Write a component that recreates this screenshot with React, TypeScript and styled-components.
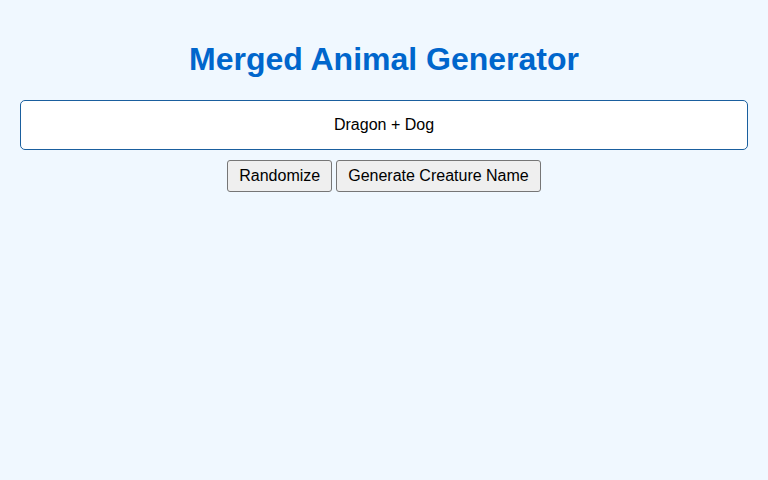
import React, { useState } from "react";
import styled, { createGlobalStyle } from "styled-components";

const GlobalStyle = createGlobalStyle`
  body {
    margin: 0;
    background: #f0f8ff;
    font-family: "Liberation Sans", Arial, sans-serif;
  }
`;

const Page = styled.div`
  padding: 20px;
  text-align: center;
`;

const Title = styled.h1`
  color: #0066cc;
  font-size: 32px;
  margin: 21px 0 22px;
`;

const NameField = styled.input`
  display: block;
  width: 100%;
  box-sizing: border-box;
  padding: 15px;
  font-size: 16px;
  font-family: "Liberation Sans", Arial, sans-serif;
  text-align: center;
  border: 1px solid #1a5f9e;
  border-radius: 5px;
  background: #fff;
  color: #000;
  margin: 0 0 10px;
`;

const BtnRow = styled.div`
  display: flex;
  justify-content: center;
  gap: 4px;
`;

const Button = styled.button`
  font-size: 16px;
  font-family: "Liberation Sans", Arial, sans-serif;
  padding: 6px 11px;
  background: #efefef;
  border: 1px solid #767676;
  border-radius: 3px;
  color: #000;
  line-height: 18px;
`;

const animals = ["Dragon", "Dog", "Cat", "Lion", "Eagle", "Shark", "Wolf", "Bear"];

function App() {
  const [value, setValue] = useState("Dragon + Dog");

  const randomize = () => {
    const a = animals[Math.floor(Math.random() * animals.length)];
    const b = animals[Math.floor(Math.random() * animals.length)];
    setValue(`${a} + ${b}`);
  };

  return (
    <>
      <GlobalStyle />
      <Page>
        <Title>Merged Animal Generator</Title>
        <NameField value={value} onChange={(e) => setValue(e.target.value)} />
        <BtnRow>
          <Button type="button" onClick={randomize}>Randomize</Button>
          <Button type="button">Generate Creature Name</Button>
        </BtnRow>
      </Page>
    </>
  );
}

export default App;
